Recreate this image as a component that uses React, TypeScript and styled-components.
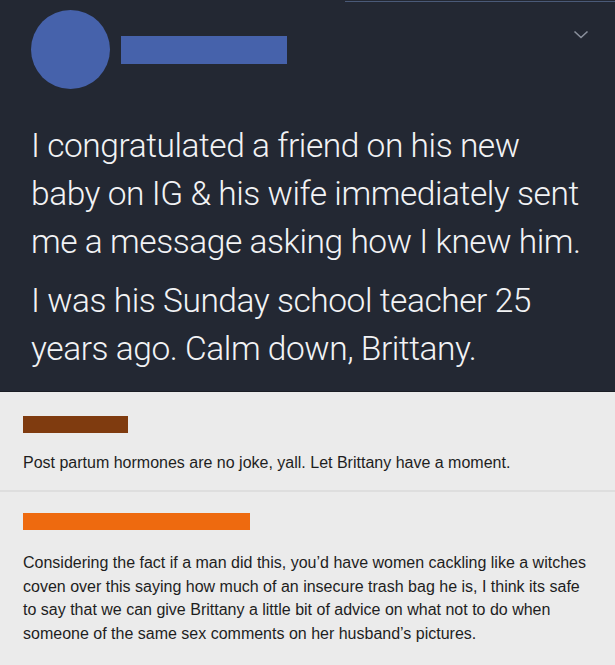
import React from "react";
import styled, { createGlobalStyle } from "styled-components";

const Global = createGlobalStyle`
  html, body { margin: 0; padding: 0; background: #ebebeb; }
  body { width: 615px; height: 665px; overflow: hidden; }
`;

const Page = styled.div`
  width: 615px;
  height: 665px;
  display: flex;
  flex-direction: column;
  background: #ebebeb;
  overflow: hidden;
`;

const Tweet = styled.section`
  position: relative;
  background: #232833;
  height: 392px;
  box-sizing: border-box;
  padding: 10px 0 0 31px;
  border-bottom: 1px solid #1a1d24;
`;

const TopLine = styled.div`
  position: absolute;
  top: 1px;
  left: 345px;
  right: 0;
  height: 1px;
  background: #4a5a78;
`;

const Header = styled.div`
  display: flex;
  align-items: center;
  gap: 11px;
  height: 79px;
`;

const Avatar = styled.div`
  width: 79px;
  height: 79px;
  border-radius: 50%;
  background: #4662ab;
`;

const NameBar = styled.div`
  width: 166px;
  height: 28px;
  background: #4662ab;
`;

const Chevron = styled.svg`
  position: absolute;
  top: 28px;
  right: 26px;
`;

const TweetText = styled.p`
  margin: 0;
  font-family: Roboto, "Liberation Sans", sans-serif;
  font-weight: 300;
  font-size: 33.5px;
  line-height: 48px;
  color: #f2f3f5;
  letter-spacing: -0.45px;
  white-space: nowrap;
`;

const Body = styled.div`
  margin-top: 33px;
  display: flex;
  flex-direction: column;
  gap: 11px;
`;

const Comment = styled.div<{ $last?: boolean; $top: number }>`
  padding: ${(p) => p.$top}px 23px 0 23px;
  border-bottom: ${(p) => (p.$last ? "none" : "2px solid #dedede")};
  height: ${(p) => (p.$last ? "auto" : "100px")};
  box-sizing: border-box;
`;

const Handle = styled.div<{ $color: string; $w: number }>`
  width: ${(p) => p.$w}px;
  height: 17px;
  background: ${(p) => p.$color};
`;

const CommentText = styled.p<{ $gap: number }>`
  margin: ${(p) => p.$gap}px 0 0 0;
  font-family: "Liberation Sans", Arial, sans-serif;
  font-size: 16px;
  line-height: 23.5px;
  color: #1e1e1e;
  white-space: nowrap;
`;

export default function App() {
  return (
    <Page>
      <Global />
      <Tweet>
        <TopLine />
        <Header>
          <Avatar />
          <NameBar />
        </Header>
        <Chevron width="16" height="12" viewBox="0 0 16 12">
          <path d="M1.5 3.5 L8 9.5 L14.5 3.5" fill="none" stroke="#8a909c" strokeWidth="1.6" />
        </Chevron>
        <Body>
          <TweetText>
            I congratulated a friend on his new
            <br />
            baby on IG &amp; his wife immediately sent
            <br />
            me a message asking how I knew him.
          </TweetText>
          <TweetText>
            I was his Sunday school teacher 25
            <br />
            years ago. Calm down, Brittany.
          </TweetText>
        </Body>
      </Tweet>
      <Comment $top={24}>
        <Handle $color="#7f3b0f" $w={105} />
        <CommentText $gap={18}>Post partum hormones are no joke, yall. Let Brittany have a moment.</CommentText>
      </Comment>
      <Comment $last $top={21}>
        <Handle $color="#ee6a0f" $w={227} />
        <CommentText $gap={21}>
          Considering the fact if a man did this, you’d have women cackling like a witches
          <br />
          coven over this saying how much of an insecure trash bag he is, I think its safe
          <br />
          to say that we can give Brittany a little bit of advice on what not to do when
          <br />
          someone of the same sex comments on her husband’s pictures.
        </CommentText>
      </Comment>
    </Page>
  );
}
